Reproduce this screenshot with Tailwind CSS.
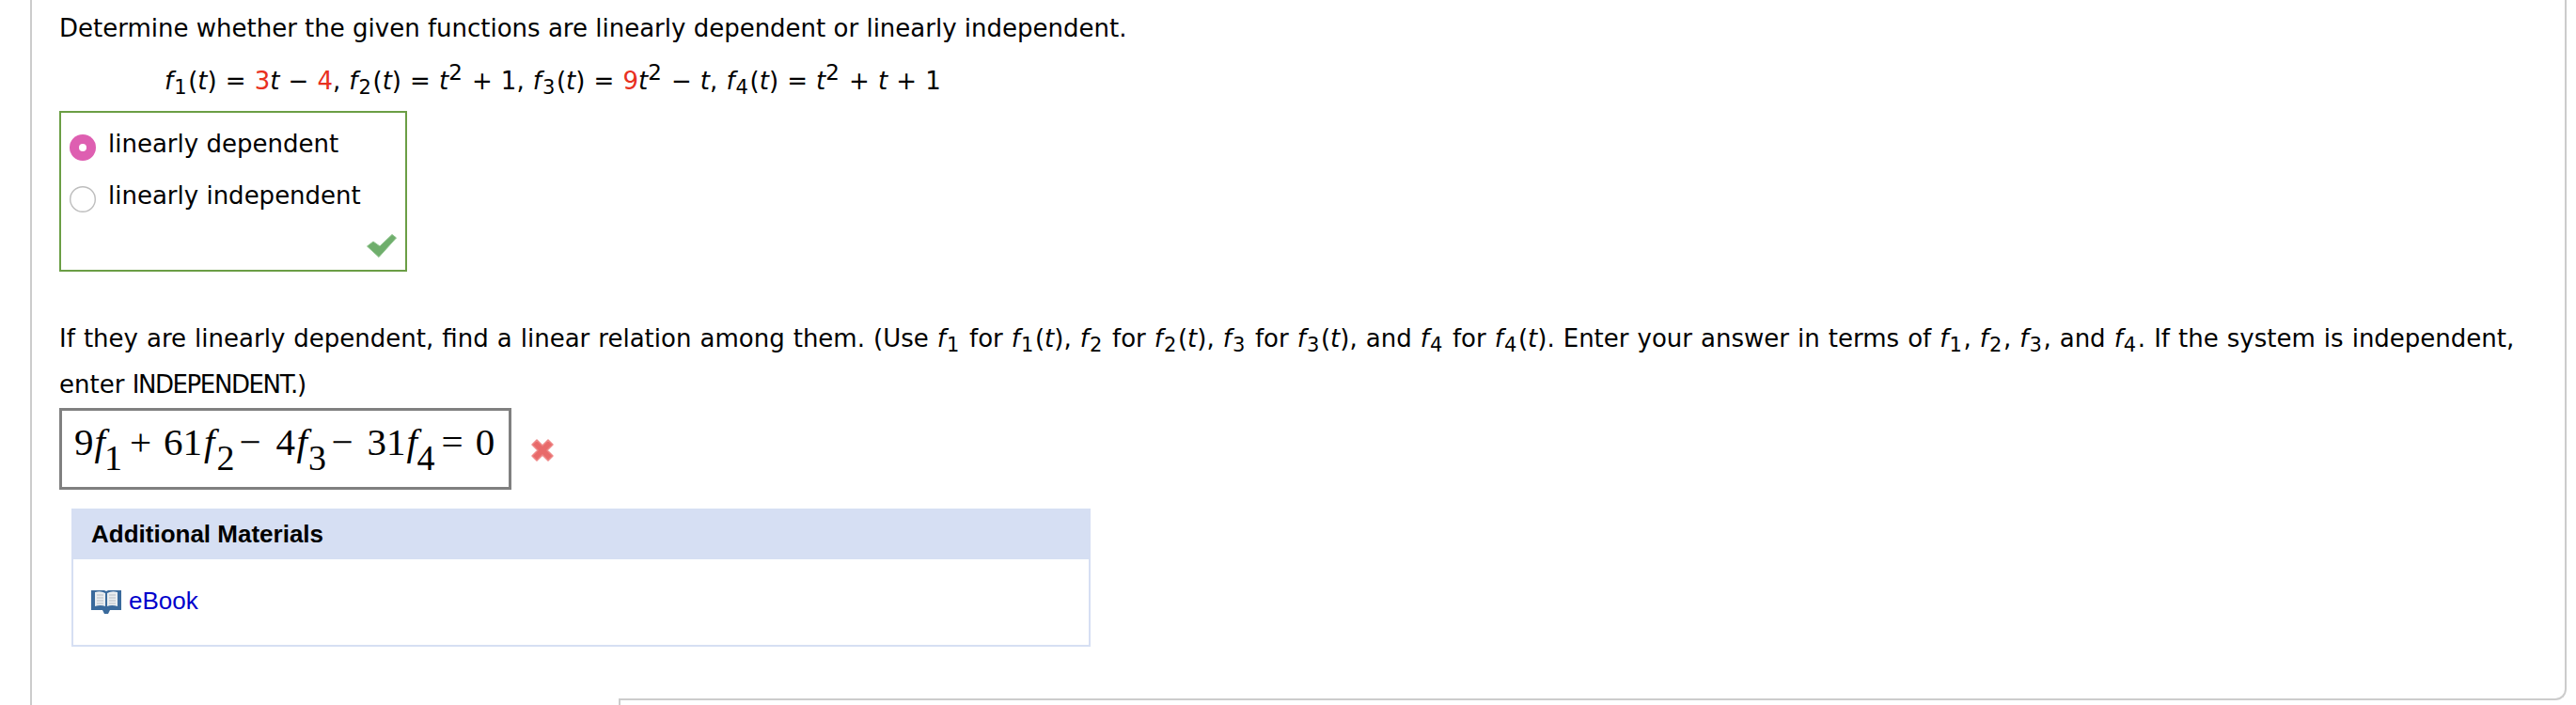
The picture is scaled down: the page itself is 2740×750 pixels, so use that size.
<!DOCTYPE html>
<html><head><meta charset="utf-8"><script src="https://cdn.jsdelivr.net/npm/@tailwindcss/browser@4"></script></head>
<body class="bg-white m-0">
<div class="w-[2740px] h-[750px] overflow-hidden flex flex-col font-['DejaVu_Sans',sans-serif] text-[26px] text-black">
  <div class="ml-[32px] w-[2698px] h-[723px] border-x-2 border-[#cccccc] pl-[29px] pt-[6px] shrink-0">
    <p class="h-[49px] leading-[49px] whitespace-nowrap">Determine whether the given functions are linearly dependent or linearly independent.</p>
    <p class="h-[49px] mt-[7px] leading-[49px] ml-[112px] whitespace-nowrap [word-spacing:0.85px]"><i>f</i><sub class="text-[21px] ml-[1px] mr-[1.6px]">1</sub>(<i>t</i>) = <span class="text-[#e8301f]">3</span><i>t</i> − <span class="text-[#e8301f]">4</span>, <i>f</i><sub class="text-[21px] ml-[1px] mr-[1.6px]">2</sub>(<i>t</i>) = <i>t</i><sup class="text-[23px] -top-[10px] mr-[1px]">2</sup> + 1, <i>f</i><sub class="text-[21px] ml-[1px] mr-[1.6px]">3</sub>(<i>t</i>) = <span class="text-[#e8301f]">9</span><i>t</i><sup class="text-[23px] -top-[10px] mr-[1px]">2</sup> − <i>t</i>, <i>f</i><sub class="text-[21px] ml-[1px] mr-[1.6px]">4</sub>(<i>t</i>) = <i>t</i><sup class="text-[23px] -top-[10px] mr-[1px]">2</sup> + <i>t</i> + 1</p>
    <div class="mt-[7px] w-[370px] h-[171px] border-2 border-[#6b9e45] pl-[9px] pt-[9px] flex flex-col relative">
      <div class="h-[55px] flex items-center gap-[13px]">
        <svg class="w-[28px] h-[28px] shrink-0" viewBox="0 0 28 28"><circle cx="14" cy="14" r="14" fill="#de5fb1"/><circle cx="14" cy="14" r="4" fill="#ffffff"/></svg>
        <span class="leading-[49px] mb-[7px]">linearly dependent</span>
      </div>
      <div class="h-[55px] flex items-center gap-[13px]">
        <svg class="w-[28px] h-[28px] shrink-0" viewBox="0 0 28 28"><circle cx="14" cy="14" r="13.3" fill="#ffffff" stroke="#bdbdbd" stroke-width="1.4"/></svg>
        <span class="leading-[49px] mb-[7px]">linearly independent</span>
      </div>
      <svg class="absolute left-[325px] top-[129px] w-[32px] h-[25px]" viewBox="0 0 32 25"><path d="M0.5 13 L7 8 L14 13 L27 0.5 L31.5 4 L13 24.5 Z" fill="#6fae6c" stroke="#8cc28a" stroke-width="1" stroke-linejoin="round"/></svg>
    </div>
    <p class="mt-[47px] leading-[49px] whitespace-nowrap [word-spacing:0.8px]">If they are linearly dependent, find a linear relation among them. (Use <i>f</i><sub class="text-[21px] ml-[1px] mr-[1.6px]">1</sub> for <i>f</i><sub class="text-[21px] ml-[1px] mr-[1.6px]">1</sub>(<i>t</i>), <i>f</i><sub class="text-[21px] ml-[1px] mr-[1.6px]">2</sub> for <i>f</i><sub class="text-[21px] ml-[1px] mr-[1.6px]">2</sub>(<i>t</i>), <i>f</i><sub class="text-[21px] ml-[1px] mr-[1.6px]">3</sub> for <i>f</i><sub class="text-[21px] ml-[1px] mr-[1.6px]">3</sub>(<i>t</i>), and <i>f</i><sub class="text-[21px] ml-[1px] mr-[1.6px]">4</sub> for <i>f</i><sub class="text-[21px] ml-[1px] mr-[1.6px]">4</sub>(<i>t</i>). Enter your answer in terms of <i>f</i><sub class="text-[21px] ml-[1px] mr-[1.6px]">1</sub>, <i>f</i><sub class="text-[21px] ml-[1px] mr-[1.6px]">2</sub>, <i>f</i><sub class="text-[21px] ml-[1px] mr-[1.6px]">3</sub>, and <i>f</i><sub class="text-[21px] ml-[1px] mr-[1.6px]">4</sub>. If the system is independent,</p>
    <p class="leading-[49px]">enter <span class="tracking-[-1.4px]">INDEPENDENT.)</span></p>
    <div class="flex items-center gap-[20px]">
      <div class="w-[481px] h-[87px] border-[3px] border-[#808080] flex items-start pl-[13px] pt-[5px] font-['Liberation_Serif',serif] text-[41px] leading-[56px] whitespace-nowrap">
        <span>9</span><i class="ml-[1px]">f</i><span class="text-[38px] translate-y-[17px] -ml-[1px]">1</span>
        <span class="ml-[8px]">+</span><span class="ml-[13px]">61</span><i class="ml-[2px]">f</i><span class="text-[38px] translate-y-[17px] ml-[2px]">2</span>
        <span class="ml-[5px]">−</span><span class="ml-[16px]">4</span><i class="ml-[1.5px]">f</i><span class="text-[38px] translate-y-[17px] ml-[1px]">3</span>
        <span class="ml-[5.5px]">−</span><span class="ml-[15px]">31</span><i class="ml-[1px]">f</i><span class="text-[38px] translate-y-[17px] -ml-[0.4px]">4</span>
        <span class="ml-[7px]">=</span><span class="ml-[13px]">0</span>
      </div>
      <svg class="w-[26px] h-[26px] mt-[3px]" viewBox="0 0 26 26"><path d="M2 7 L7 2 L13 8 L19 2 L24 7 L18 13 L24 19 L19 24 L13 18 L7 24 L2 19 L8 13 Z" fill="#e86a6a" stroke="#ee8888" stroke-width="1.5" stroke-linejoin="round"/></svg>
    </div>
    <div class="mt-[20px] ml-[13px] w-[1084px] h-[147px] border-2 border-t-0 border-[#d6dff3] font-['Liberation_Sans',sans-serif]">
      <div class="-mx-[2px] h-[54px] bg-[#d6dff3] pl-[21px] flex items-center font-bold text-[26px]">Additional Materials</div>
      <div class="pl-[19px] pt-[25px] flex items-center gap-[8px] text-[#0000cc] text-[26px]">
        <svg class="w-[32px] h-[28px]" viewBox="0 0 32 28"><path d="M0 2 H14 L16 3 L18 2 H32 V23 H20 L18 27 H14 L12 23 H0 Z" fill="#3a6a9c"/><path d="M4 4 Q10 2 15 5 V19 Q10 17 4 19 Z M17 5 Q22 2 28 4 V19 Q22 17 17 19 Z" fill="#e9edf0"/><path d="M6 7 H13 M6 10 H13 M6 13 H13 M6 16 H13 M19 7 H26 M19 10 H26 M19 13 H26 M19 16 H26" stroke="#b8bec4" stroke-width="1.2"/></svg>
        <span>eBook</span>
      </div>
    </div>
  </div>
  <div class="ml-[32px] w-[2698px] flex flex-1">
    <div class="w-[626px] border-l-2 border-[#cccccc]"></div>
    <div class="flex-1 flex flex-col">
      <div class="h-[22px] border-r-2 border-b-2 border-[#cccccc] rounded-br-[12px]"></div>
      <div class="flex-1 border-l-2 border-[#cccccc]"></div>
    </div>
  </div>
</div>
</body></html>
